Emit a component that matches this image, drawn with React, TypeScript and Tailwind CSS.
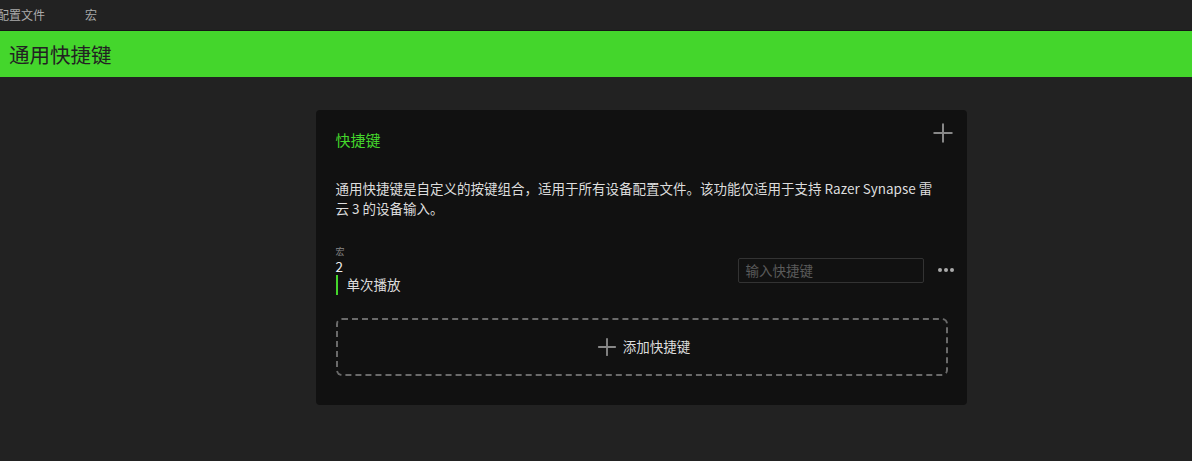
import { Plus } from 'lucide-react'

export default function App() {
  return (
    <main className="min-h-screen bg-[#222222] font-['Noto_Sans_CJK_SC','Noto_Sans',sans-serif] text-[#cccccc]">
      <nav className="h-[31px] flex items-center border-b border-[#161616] text-[12px] text-[#aaaaaa]">
        <span className="-ml-[3px]">配置文件</span>
        <span className="ml-[40px]">宏</span>
      </nav>
      <header className="h-[46px] bg-[#44d62c] flex items-center pl-[9px]">
        <h1 className="text-[20.5px] text-[#222222]">通用快捷键</h1>
      </header>
      <div className="flex justify-center pt-[33px] pl-[90px]">
        <section className="w-[651px] bg-[#111111] rounded-[4px] px-[20px] pt-[14px] pb-[29px]">
          <div className="flex justify-between items-start">
            <h2 className="text-[15px] text-[#44d62c] mt-[5px]">快捷键</h2>
            <Plus className="w-[30px] h-[30px] text-[#888888] -mt-[6px] -mr-[11px]" strokeWidth={1.6} />
          </div>
          <p className="mt-[26px] pr-[10px] text-[13.5px] leading-[20px] text-[#dddddd]">
            通用快捷键是自定义的按键组合，适用于所有设备配置文件。该功能仅适用于支持 Razer Synapse 雷云 3 的设备输入。
          </p>
          <div className="mt-[28px] flex items-start">
            <div className="flex-1">
              <div className="text-[9px] leading-[12px] text-[#888888]">宏</div>
              <div className="text-[13.5px] leading-[16px] text-[#eeeeee]">2</div>
              <div className="mt-[1px] flex items-center h-[20px] border-l-2 border-[#44d62c] pl-[9px] text-[13.5px] text-[#dddddd]">单次播放</div>
            </div>
            <div className="mt-[12px] w-[186px] h-[25px] border border-[#333333] rounded-[2px] flex items-center px-[7px] text-[13.5px] text-[#5a5a5a]">
              输入快捷键
            </div>
            <div className="mt-[12px] ml-[14px] h-[25px] flex items-center gap-[2px] mr-[-7px]">
              <span className="w-[4px] h-[4px] rounded-full bg-[#aaaaaa]" />
              <span className="w-[4px] h-[4px] rounded-full bg-[#aaaaaa]" />
              <span className="w-[4px] h-[4px] rounded-full bg-[#aaaaaa]" />
            </div>
          </div>
          <button className="mt-[23px] w-[612px] h-[58px] border-2 border-dashed border-[#6a6a6a] rounded-[6px] flex items-center justify-center gap-[2px] text-[13.5px] text-[#dddddd]">
            <Plus className="w-[28px] h-[28px] text-[#888888]" strokeWidth={1.6} />
            添加快捷键
          </button>
        </section>
      </div>
    </main>
  )
}
